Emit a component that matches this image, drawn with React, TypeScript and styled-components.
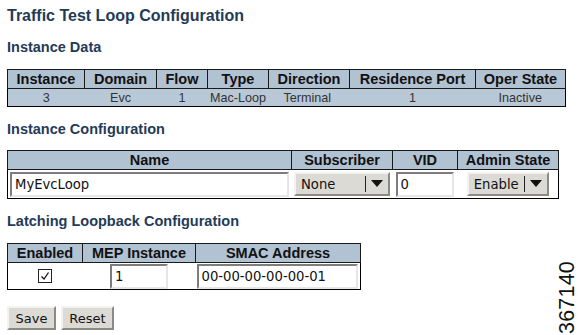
import { FC } from "react";
import styled, { createGlobalStyle, css } from "styled-components";

const HEAD_BG = "#b1c2d2";
const ROW_BG = "#b9c8d6";
const TITLE = "#1f3b58";

const Global = createGlobalStyle`
  html, body {
    margin: 0;
    padding: 0;
    background: #fff;
  }
  body {
    font-family: "Liberation Sans", Arial, sans-serif;
  }
`;

const Page = styled.div`
  position: relative;
  width: 581px;
  height: 335px;
  padding: 6px 7px 0;
  box-sizing: border-box;
  overflow: hidden;
`;

const Title = styled.h1`
  margin: 0;
  font-size: 16px;
  line-height: 20px;
  font-weight: bold;
  color: ${TITLE};
`;

const Heading = styled.h2<{ $top: number; $bottom: number }>`
  margin: ${(p) => p.$top}px 0 ${(p) => p.$bottom}px;
  font-size: 14.5px;
  line-height: 18px;
  font-weight: bold;
  color: ${TITLE};
`;

const Table = styled.table<{ $width: number }>`
  width: ${(p) => p.$width}px;
  border-collapse: collapse;
  table-layout: fixed;
  border: 1px solid #000;
`;

const Th = styled.th<{ $w: number }>`
  width: ${(p) => p.$w}px;
  height: 18px;
  padding: 0;
  background: ${HEAD_BG};
  border: 1px solid #1a1a1a;
  font-size: 14.5px;
  font-weight: bold;
  color: #111;
  text-align: center;
  white-space: nowrap;
`;

const Row = styled.tr<{ $h: number; $shade?: boolean }>`
  height: ${(p) => p.$h}px;
  background: ${(p) => (p.$shade ? ROW_BG : "#fff")};
`;

const Td = styled.td<{ $align?: string; $pad?: number }>`
  padding: 0 0 0 ${(p) => p.$pad ?? 0}px;
  font-size: 12.6px;
  color: #333;
  text-align: ${(p) => p.$align ?? "center"};
  vertical-align: middle;
  white-space: nowrap;
`;

const control = css`
  font-family: "DejaVu Sans", sans-serif;
  font-size: 13.2px;
  color: #111;
  box-sizing: border-box;
`;

const TextInput = styled.input<{ $w: number }>`
  ${control}
  width: ${(p) => p.$w}px;
  height: 25px;
  padding: 0 3px;
  background: #fff;
  border-style: solid;
  border-width: 2px;
  border-color: #7d7d7d #e6e6e6 #e6e6e6 #7d7d7d;
  outline: none;
  vertical-align: middle;
`;

const FakeSelect = styled.div<{ $w: number }>`
  ${control}
  display: inline-flex;
  align-items: center;
  width: ${(p) => p.$w}px;
  height: 24px;
  background: #dcdad5;
  border-style: solid;
  border-width: 2px;
  border-color: #f4f3f1 #8c8a85 #8c8a85 #f4f3f1;
  vertical-align: middle;
  text-align: left;
`;

const SelectLabel = styled.span`
  flex: 1;
  padding-left: 5px;
`;

const SelectSep = styled.span`
  width: 1px;
  height: 16px;
  background: #222;
`;

const SelectArrow = styled.span`
  width: 22px;
  display: flex;
  justify-content: center;
  align-items: center;
`;

const Check = styled.span`
  display: inline-flex;
  width: 14px;
  height: 14px;
  box-sizing: border-box;
  border: 1px solid #222;
  background: #fff;
  align-items: center;
  justify-content: center;
  vertical-align: middle;
`;

const Buttons = styled.div`
  display: flex;
  gap: 5px;
  margin-top: 16px;
`;

const Button = styled.button<{ $w: number }>`
  ${control}
  width: ${(p) => p.$w}px;
  height: 24px;
  padding: 0;
  background: #dcdad5;
  border-style: solid;
  border-width: 2px;
  border-color: #f4f3f1 #8c8a85 #8c8a85 #f4f3f1;
  font-size: 13px;
`;

const FigureId = styled.div`
  position: absolute;
  right: -23px;
  bottom: 25px;
  transform: rotate(-90deg);
  transform-origin: center;
  font-size: 21.5px;
  color: #111;
  letter-spacing: 0.2px;
`;

const Arrow: FC = () => (
  <svg width="12" height="8" viewBox="0 0 12 8">
    <polygon points="0,0 12,0 6,7" fill="#111" />
  </svg>
);

const Select: FC<{ w: number; label: string }> = ({ w, label }) => (
  <FakeSelect $w={w}>
    <SelectLabel>{label}</SelectLabel>
    <SelectSep />
    <SelectArrow>
      <Arrow />
    </SelectArrow>
  </FakeSelect>
);

const instanceCols = [
  ["Instance", 76],
  ["Domain", 71],
  ["Flow", 50],
  ["Type", 60],
  ["Direction", 80],
  ["Residence Port", 125],
  ["Oper State", 89],
] as const;

const instanceData = ["3", "Evc", "1", "Mac-Loop", "Terminal", "1", "Inactive"];

export default function App() {
  return (
    <Page>
      <Global />
      <Title>Traffic Test Loop Configuration</Title>

      <Heading $top={12} $bottom={13}>Instance Data</Heading>
      <Table $width={551}>
        <thead>
          <tr>
            {instanceCols.map(([n, w]) => (
              <Th key={n} $w={w}>{n}</Th>
            ))}
          </tr>
        </thead>
        <tbody>
          <Row $h={18} $shade>
            {instanceData.map((v, i) => (
              <Td key={i} $align={i === 4 ? "left" : "center"} $pad={i === 4 ? 15 : 0}>
                {v}
              </Td>
            ))}
          </Row>
        </tbody>
      </Table>

      <Heading $top={13} $bottom={12}>Instance Configuration</Heading>
      <Table $width={547}>
        <thead>
          <tr>
            <Th $w={283}>Name</Th>
            <Th $w={100}>Subscriber</Th>
            <Th $w={64}>VID</Th>
            <Th $w={100}>Admin State</Th>
          </tr>
        </thead>
        <tbody>
          <Row $h={29}>
            <Td $align="left" $pad={2}>
              <TextInput $w={279} defaultValue="MyEvcLoop" />
            </Td>
            <Td>
              <Select w={96} label="None" />
            </Td>
            <Td $align="left" $pad={3}>
              <TextInput $w={58} defaultValue="0" />
            </Td>
            <Td>
              <Select w={82} label="Enable" />
            </Td>
          </Row>
        </tbody>
      </Table>

      <Heading $top={13} $bottom={13}>Latching Loopback Configuration</Heading>
      <Table $width={350}>
        <thead>
          <tr>
            <Th $w={74}>Enabled</Th>
            <Th $w={112}>MEP Instance</Th>
            <Th $w={164}>SMAC Address</Th>
          </tr>
        </thead>
        <tbody>
          <Row $h={27}>
            <Td>
              <Check>
                <svg width="10" height="10" viewBox="0 0 10 10">
                  <polyline points="1.5,5.5 4,8 8.5,1.5" fill="none" stroke="#111" strokeWidth="1.3" />
                </svg>
              </Check>
            </Td>
            <Td>
              <TextInput $w={58} defaultValue="1" />
            </Td>
            <Td $align="left" $pad={1}>
              <TextInput $w={161} defaultValue="00-00-00-00-00-01" />
            </Td>
          </Row>
        </tbody>
      </Table>

      <Buttons>
        <Button $w={49}>Save</Button>
        <Button $w={53}>Reset</Button>
      </Buttons>

      <FigureId>367140</FigureId>
    </Page>
  );
}
